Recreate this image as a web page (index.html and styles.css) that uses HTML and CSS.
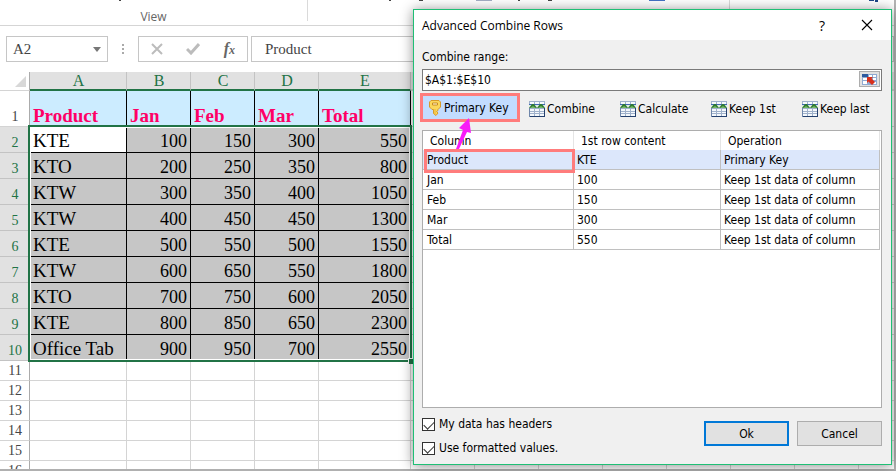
FILE: index.html
```html
<!DOCTYPE html>
<html lang="en">
<head>
	<meta charset="UTF-8">
	<title>Advanced Combine Rows</title>
	<link rel="stylesheet" href="styles.css">
</head>
<body>
	<!-- shared icons -->
	<svg class="defs" width="0" height="0">
		<symbol id="gridIcon" viewBox="0 0 16 16">
			<rect x="0" y="0" width="16" height="16" fill="#9fb1cb"/>
			<path d="M1 1h4v2H1zM6 1h4v2H6zM11 1h4v2h-4z" fill="#f4f8fc"/>
			<path d="M0 3h16v1H0z" fill="#3f66b5"/>
			<path d="M0 4h16v3H0z" fill="#dfeee0"/>
			<path d="M0 7l3-4h2l3 4zM8 7l3-4h2l3 4z" fill="#2f7a32"/>
			<path d="M1 7l3-2 3 2zM9 7l3-2 3 2z" fill="#74b866"/>
			<path d="M1 8h4v2H1zM6 8h4v2H6zM11 8h4v2h-4zM1 11h4v1H1zM6 11h4v1H6zM11 11h4v1h-4zM1 13h4v2H1zM6 13h4v2H6zM11 13h4v2h-4z" fill="#f4f8fc"/>
			<path d="M0 15.5h16M15.500 7v9" stroke="#24406e" fill="none"/>
			<path d="M.5 7v9" stroke="#6f86aa" fill="none"/>
		</symbol>
	</svg>

	<div class="excel">
		<div class="ribbon">
			<svg class="ribbonBits" width="896" height="2" viewBox="0 0 896 2">
				<path d="M119 0h2v1h-2zM389 0h2v1h-2zM419 0h4v1h-4zM518 0h2v1h-2zM548 0h4v1h-4z" fill="#444"/>
				<path d="M476 0h16v1h-16z" fill="#a3adc4"/>
				<path d="M649 0h16v1h-16z" fill="#4472c4"/>
				<path d="M869 0h5v1h-5zM875 0h3v2h-3z" fill="#1c4587"/>
			</svg>
			<div class="group viewGroup">View</div>
			<div class="group showGroup"></div>
		</div>

		<div class="formulaBar">
			<button class="nameBox">A2
				<svg width="8" height="5" viewBox="0 0 8 5"><path d="M0 0h8L4 5z" fill="#777"/></svg>
			</button>
			<svg class="dots" width="2" height="10" viewBox="0 0 2 10"><path d="M0 0h2v2H0zM0 4h2v2H0zM0 8h2v2H0z" fill="#aaa"/></svg>
			<div class="fxBox">
				<button aria-label="Cancel entry"><svg width="12" height="12" viewBox="0 0 12 12"><path d="M1 1l10 10M11 1L1 11" stroke="#bcbcbc" stroke-width="2"/></svg></button>
				<button aria-label="Enter"><svg width="14" height="12" viewBox="0 0 14 12"><path d="M1 6l4 4 8-9" stroke="#bcbcbc" stroke-width="3" fill="none"/></svg></button>
				<button class="fx" aria-label="Insert function">f<sub>x</sub></button>
			</div>
			<input class="formula" type="text" value="Product" aria-label="Formula">
		</div>

		<div class="sheet">
			<table class="cells">
				<colgroup>
					<col class="wHead"><col class="wA"><col class="wB"><col class="wB"><col class="wB"><col class="wE">
					<col class="wB"><col class="wB"><col class="wB"><col class="wB"><col class="wB"><col class="wB"><col class="wB"><col class="wB">
				</colgroup>
				<tr class="letters"><th class="corner"><svg width="11" height="11" viewBox="0 0 11 11"><path d="M11 0v11H0z" fill="#d8d8d8"/></svg></th><th>A</th><th>B</th><th>C</th><th>D</th><th>E</th><th colspan="8" class="rest"></th></tr>
				<tr class="titles"><th>1</th><td>Product</td><td>Jan</td><td>Feb</td><td>Mar</td><td>Total</td><td colspan="8" class="rest"></td></tr>
				<tr class="picked"><th>2</th><td class="active">KTE</td><td>100</td><td>150</td><td>300</td><td>550</td><td colspan="8" class="rest"></td></tr>
				<tr class="picked"><th>3</th><td>KTO</td><td>200</td><td>250</td><td>350</td><td>800</td><td colspan="8" class="rest"></td></tr>
				<tr class="picked"><th>4</th><td>KTW</td><td>300</td><td>350</td><td>400</td><td>1050</td><td colspan="8" class="rest"></td></tr>
				<tr class="picked"><th>5</th><td>KTW</td><td>400</td><td>450</td><td>450</td><td>1300</td><td colspan="8" class="rest"></td></tr>
				<tr class="picked"><th>6</th><td>KTE</td><td>500</td><td>550</td><td>500</td><td>1550</td><td colspan="8" class="rest"></td></tr>
				<tr class="picked"><th>7</th><td>KTW</td><td>600</td><td>650</td><td>550</td><td>1800</td><td colspan="8" class="rest"></td></tr>
				<tr class="picked"><th>8</th><td>KTO</td><td>700</td><td>750</td><td>600</td><td>2050</td><td colspan="8" class="rest"></td></tr>
				<tr class="picked"><th>9</th><td>KTE</td><td>800</td><td>850</td><td>650</td><td>2300</td><td colspan="8" class="rest"></td></tr>
				<tr class="picked"><th>10</th><td>Office Tab</td><td>900</td><td>950</td><td>700</td><td>2550</td><td colspan="8" class="rest"></td></tr>
				<tr><th>11</th><td></td><td></td><td></td><td></td><td></td><td></td><td></td><td></td><td></td><td></td><td></td><td></td><td></td></tr>
				<tr><th>12</th><td></td><td></td><td></td><td></td><td></td><td></td><td></td><td></td><td></td><td></td><td></td><td></td><td></td></tr>
				<tr><th>13</th><td></td><td></td><td></td><td></td><td></td><td></td><td></td><td></td><td></td><td></td><td></td><td></td><td></td></tr>
				<tr><th>14</th><td></td><td></td><td></td><td></td><td></td><td></td><td></td><td></td><td></td><td></td><td></td><td></td><td></td></tr>
				<tr><th>15</th><td></td><td></td><td></td><td></td><td></td><td></td><td></td><td></td><td></td><td></td><td></td><td></td><td></td></tr>
				<tr><th>16</th><td></td><td></td><td></td><td></td><td></td><td></td><td></td><td></td><td></td><td></td><td></td><td></td><td></td></tr>
			</table>
			<div class="selection"><span class="handle"></span></div>
		</div>
	</div>

	<div class="dialog" role="dialog" aria-labelledby="dialogTitle">
		<header>
			<h1 id="dialogTitle">Advanced Combine Rows</h1>
			<button class="help" aria-label="Help">?</button>
			<button class="close" aria-label="Close"><svg width="12" height="12" viewBox="0 0 12 12"><path d="M1 1l10 10M11 1L1 11" stroke="#000" stroke-width="1.1"/></svg></button>
		</header>
		<div class="content">
			<label class="rangeLabel" for="range">Combine range:</label>
			<div class="rangeBox">
				<input id="range" type="text" value="$A$1:$E$10">
				<button aria-label="Select range">
					<svg width="15" height="11" viewBox="0 0 15 11">
						<path d="M0 0h15v11H0z" fill="#8faad2"/>
						<path d="M0 0h6v3H0z" fill="#2d5a9e"/>
						<path d="M7 1h3v2H7zM11 1h3v2h-3zM1 4h4v2H1zM11 4h3v2h-3zM1 7h4v3H1zM11 8h3v2h-3z" fill="#fff"/>
						<path d="M5 3h6L9.500 4.500 13 8l-3 3-3.500-3.500L5 9z" fill="#d8301c"/>
					</svg>
				</button>
			</div>

			<div class="tools">
				<button class="tool primary">
					<svg width="12" height="16" viewBox="0 0 12 16">
						<path d="M2 .5h8l1.500 1.500v5L9 9.500v1l-1.500 1L9 13l-2 2.500-2.500-2V9.500H3L.5 7V2z" fill="#fbd75b" stroke="#d79a2b"/>
						<path d="M3.500 3h5v2h-5z" fill="#fff7d8" stroke="#c98c22"/>
						<path d="M6 9v5" stroke="#e8b53c"/>
					</svg>
					Primary Key
				</button>
				<button class="tool"><svg width="16" height="16"><use href="#gridIcon"/></svg>Combine</button>
				<button class="tool"><svg width="16" height="16"><use href="#gridIcon"/></svg>Calculate</button>
				<button class="tool"><svg width="16" height="16"><use href="#gridIcon"/></svg>Keep 1st</button>
				<button class="tool"><svg width="16" height="16"><use href="#gridIcon"/></svg>Keep last</button>
				<svg class="arrow" width="16" height="32" viewBox="0 0 16 32"><path d="M13 0L3 10l4 2L0 31h3l8-17 4 1z" fill="#f81cf8"/></svg>
			</div>

			<div class="list">
				<table>
					<colgroup><col class="wColumn"><col class="wFirst"><col></colgroup>
					<thead><tr><th>Column</th><th>1st row content</th><th>Operation</th></tr></thead>
					<tbody>
						<tr class="current"><td class="marked">Product</td><td>KTE</td><td>Primary Key</td></tr>
						<tr><td>Jan</td><td>100</td><td>Keep 1st data of column</td></tr>
						<tr><td>Feb</td><td>150</td><td>Keep 1st data of column</td></tr>
						<tr><td>Mar</td><td>300</td><td>Keep 1st data of column</td></tr>
						<tr><td>Total</td><td>550</td><td>Keep 1st data of column</td></tr>
					</tbody>
				</table>
			</div>

			<footer>
				<div class="checks">
					<label><input type="checkbox" checked>My data has headers</label>
					<label><input type="checkbox" checked>Use formatted values.</label>
				</div>
				<button class="action ok">Ok</button>
				<button class="action">Cancel</button>
			</footer>
		</div>
	</div>
</body>
</html>
```
FILE: styles.css
```css
* {
	box-sizing: border-box;
}

body {
	margin: 0;
	height: 100vh;
	position: relative;
	overflow: hidden;
	background: #fff;
	font-family: "DejaVu Sans Condensed", "Noto Sans", sans-serif;
	font-size: 12px;
	color: #000;
}

button, input {
	font: inherit;
	color: inherit;
	margin: 0;
	padding: 0;
	border: none;
	background: none;
}

svg {
	display: block;
	flex: none;
}

.defs {
	position: absolute;
}

/* spreadsheet window */
.excel {
	height: 100vh;
	overflow: hidden;
	border-right: 2px solid #b4b4b4;
	border-bottom: 2px solid #b0b0b0;
}

.ribbon {
	position: relative;
	display: flex;
	height: 26px;
	border-bottom: 1px solid #d5d5d5;
}

.ribbonBits {
	position: absolute;
	top: 0;
	left: 0;
}

.group {
	height: 21px;
	border-right: 1px solid #dadada;
	text-align: center;
	line-height: 34px;
	font-family: "Open Sans", sans-serif;
	color: #666;
}

.viewGroup {
	width: 308px;
}

.showGroup {
	width: 422px;
}

.formulaBar {
	display: flex;
	align-items: center;
	height: 46px;
	padding-left: 6px;
	font-family: "Liberation Serif", serif;
	font-size: 15px;
	color: #444;
}

.nameBox, .fxBox, .formula {
	height: 26px;
	border: 1px solid #c6c6c6;
}

.nameBox {
	display: flex;
	align-items: center;
	justify-content: space-between;
	width: 102px;
	padding: 0 6px;
}

.dots {
	margin: 0 14px;
}

.fxBox {
	display: flex;
	align-items: center;
	justify-content: space-between;
	width: 110px;
	padding: 0 12px;
}

.fx {
	font-style: italic;
	font-weight: bold;
	font-size: 16px;
	line-height: 20px;
	color: #666;
}

.fx sub {
	font-size: 12px;
	line-height: 1px;
	vertical-align: baseline;
}

.formula {
	flex: 1;
	margin-left: 3px;
	padding-left: 13px;
}

.sheet {
	position: relative;
}

.cells {
	table-layout: fixed;
	width: 923px;
	border-collapse: separate;
	border-spacing: 0;
	font-family: "Liberation Serif", serif;
}

.wHead { width: 30px; }
.wA { width: 97px; }
.wB { width: 64px; }
.wE { width: 92px; }

.cells th, .cells td {
	height: 20px;
	padding: 0;
	border-right: 1px solid #d4d4d4;
	border-bottom: 1px solid #d4d4d4;
	vertical-align: bottom;
}

.cells th {
	padding-left: 1px;
	border-right-color: #ababab;
	font-size: 14px;
	font-weight: normal;
	line-height: 18px;
	color: #444;
}

.cells .letters th {
	height: 19px;
	background: #e1e1e1;
	border-right-color: #c3c3c3;
	border-bottom: 2px solid #217346;
	font-size: 16px;
	line-height: 17px;
	vertical-align: bottom;
	color: #217346;
}

.cells .letters .corner {
	background: #fff;
	border-right-color: #ababab;
	border-bottom: 1px solid #d4d4d4;
}

.corner svg {
	margin: 0 0 3px 14px;
}

.titles td, .picked td {
	border-color: #000;
	font-size: 19px;
	line-height: 20px;
}

.cells .titles td {
	height: 36px;
	padding-left: 3px;
	background: #ccecff;
	font-weight: bold;
	color: #ff0066;
}

.cells .picked td {
	height: 26px;
	padding: 0 3px 1px 0;
	background: #c6c6c6;
	text-align: right;
	font-size: 18px;
}

.cells .picked td:nth-child(2) {
	padding-left: 3px;
	text-align: left;
	font-size: 19px;
}

.cells .picked .active {
	background: #fff;
}

.picked th {
	background: #e1e1e1;
}

.cells .picked th {
	border-bottom-color: #c3c3c3;
	color: #217346;
}

.cells tr .rest {
	background: #fff;
	border-color: #d4d4d4;
}

.cells .letters .rest {
	background: #e8e8e8;
}

/* frame drawn over the selected cells */
.selection {
	position: absolute;
	top: 53px;
	left: 28px;
	width: 384px;
	height: 237px;
	border: 2px solid #217346;
	box-shadow: inset 0 0 0 1px #fff;
}

.handle {
	position: absolute;
	right: -4px;
	bottom: -4px;
	width: 6px;
	height: 6px;
	border: 1px solid #fff;
	border-width: 1px 0 0 1px;
	background: #217346;
}

/* dialog */
.dialog {
	position: absolute;
	top: 9px;
	right: 4px;
	width: 479px;
	border: 1px solid #1fbf75;
	background: #f0f0f0;
	box-shadow: 0 1px 12px rgba(0, 0, 0, 0.45);
}

.dialog header {
	display: flex;
	align-items: center;
	height: 30px;
	padding: 0 18px 0 8px;
	background: #fff;
}

.dialog h1 {
	flex: 1;
	margin: 0;
	font-family: "Open Sans", sans-serif;
	font-size: 12px;
	font-weight: normal;
}

.help {
	margin-right: 36px;
	font-family: "Open Sans", sans-serif;
	font-size: 14px;
}

.content {
	padding: 8px 9px 7px 8px;
}

.rangeLabel {
	display: block;
	height: 21px;
	line-height: 18px;
}

.rangeBox {
	display: flex;
	height: 22px;
	padding: 1px;
	border: 1px solid #7a7a7a;
	background: #fff;
}

.rangeBox input {
	flex: 1;
	padding-left: 1px;
}

.rangeBox button {
	display: flex;
	align-items: center;
	justify-content: center;
	width: 21px;
	height: 16px;
	border: 1px solid #adadad;
	background: #e1e1e1;
}

.tools {
	position: relative;
	display: flex;
	gap: 9px;
	height: 39px;
	margin-left: -2px;
	padding-top: 2px;
}

.tool {
	display: flex;
	flex: none;
	align-items: center;
	gap: 2px;
	width: 82px;
	height: 29px;
	padding-top: 2px;
	white-space: nowrap;
}

.primary {
	gap: 3px;
	width: 100px;
	padding: 1px 0 0 6px;
	border: 3px solid #ff7c7c;
	background: #c2dcff;
}

.arrow {
	position: absolute;
	top: 27px;
	left: 36px;
	z-index: 1;
}

.list {
	height: 278px;
	border: 1px solid #adadad;
	background: #fff;
	padding-right: 1px;
}

.list table {
	table-layout: fixed;
	width: 100%;
	border-collapse: separate;
	border-spacing: 0;
}

.wColumn { width: 151px; }
.wFirst { width: 147px; }

.list th, .list td {
	height: 20px;
	padding: 1px 0 0 3px;
	border-right: 1px solid #c0c0c0;
	border-bottom: 1px solid #c0c0c0;
	text-align: left;
	line-height: 18px;
	font-weight: normal;
}

.list th {
	height: 19px;
	padding: 0 0 0 7px;
	border-right-color: #e5e5e5;
	border-bottom: none;
}

.list td:first-child {
	padding-left: 4px;
}

.current td {
	background: #dce7fb;
}

.marked {
	position: relative;
}

.marked::after {
	content: "";
	position: absolute;
	top: -1px;
	left: 1px;
	right: -2px;
	bottom: -4px;
	border: 3px solid #ff7c7c;
}

.dialog footer {
	display: flex;
	gap: 8px;
	padding-top: 7px;
}

.checks {
	flex: 1;
	display: flex;
	flex-direction: column;
	gap: 6px;
}

.checks label {
	display: flex;
	align-items: center;
	gap: 4px;
	height: 18px;
}

.checks input {
	appearance: none;
	width: 13px;
	height: 13px;
	margin-top: 1px;
	border: 1px solid #333;
	background: #fff;
}

.checks input:checked::after {
	content: "";
	display: block;
	width: 9px;
	height: 5px;
	margin: 2px 1px;
	border: solid #333;
	border-width: 0 0 1px 1px;
	transform: rotate(-45deg);
}

.action {
	width: 85px;
	height: 25px;
	margin-top: 6px;
	border: 1px solid #adadad;
	background: #e1e1e1;
}

.ok {
	border: 2px solid #0078d7;
}
```
